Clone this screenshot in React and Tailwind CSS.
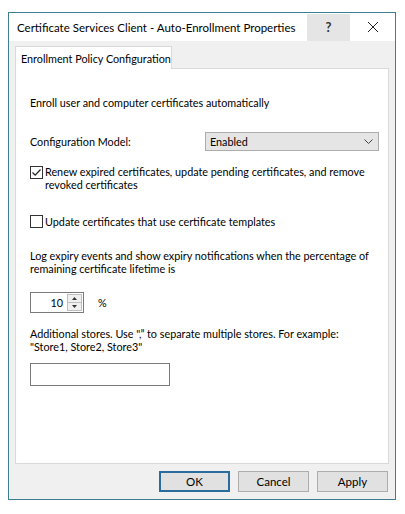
import React from "react";

const font = { fontFamily: 'Lato, "Liberation Sans", sans-serif' };

function CheckBox({ checked }) {
  return (
    <span className="flex h-[13px] w-[13px] shrink-0 items-center justify-center border border-[#333] bg-white">
      {checked && (
        <svg width="11" height="11" viewBox="0 0 11 11">
          <path d="M1.5 5.5 L4.2 8.2 L9.5 2.5" fill="none" stroke="#222" strokeWidth="1.2" />
        </svg>
      )}
    </span>
  );
}

function Button({ children, primary }) {
  return (
    <div
      className={
        "flex h-[21px] w-[71px] items-center justify-center bg-[#e1e1e1] text-[11.5px] text-black " +
        (primary ? "border-2 border-[#2a6c9c]" : "border border-[#adadad]")
      }
    >
      {children}
    </div>
  );
}

export default function App() {
  return (
    <div className="h-[514px] w-[405px] bg-white pl-[8px] pt-[12px]" style={font}>
      <div className="flex h-[488px] w-[388px] flex-col whitespace-nowrap border border-[#3f7f8f] bg-[#f0f0f0] text-[10.8px] leading-[13px] text-black">
        {/* title bar */}
        <div className="flex h-[28px] items-stretch bg-white">
          <div className="flex flex-1 items-center pl-[8px] text-[11.5px]">
            Certificate Services Client - Auto-Enrollment Properties
          </div>
          <div className="mt-[1px] flex w-[43px] items-center justify-center bg-[#e5e5e5] text-[13px] font-bold text-[#333]">
            ?
          </div>
          <div className="flex w-[45px] items-center justify-center">
            <svg width="12" height="12" viewBox="0 0 12 12">
              <path d="M1 1 L11 11 M11 1 L1 11" stroke="#222" strokeWidth="1" />
            </svg>
          </div>
        </div>

        {/* tab strip */}
        <div className="flex pl-[6px] pt-[5px]">
          <div className="relative z-10 -mb-px flex h-[23px] w-[157px] items-center border border-b-0 border-[#d9d9d9] bg-white pl-[5px]">
            Enrollment Policy Configuration
          </div>
        </div>

        {/* tab page */}
        <div className="mx-[6px] flex h-[396px] flex-col border border-[#d9d9d9] bg-white pl-[14px] pr-[8px]">
          <div className="mt-[27px]">Enroll user and computer certificates automatically</div>

          <div className="mt-[23px] flex items-center">
            <span className="w-[175px]">Configuration Model:</span>
            <div className="flex h-[19px] w-[174px] items-center justify-between border border-[#adadad] bg-[#e5e5e5] pl-[4px] pr-[5px]">
              <span>Enabled</span>
              <svg width="9" height="6" viewBox="0 0 9 6">
                <path d="M0.5 0.5 L4.5 4.5 L8.5 0.5" fill="none" stroke="#444" strokeWidth="1" />
              </svg>
            </div>
          </div>

          <div className="mt-[14px] flex items-start">
            <span className="mt-[1px]">
              <CheckBox checked />
            </span>
            <span className="ml-[2px]">
              Renew expired certificates, update pending certificates, and remove
              <br />
              revoked certificates
            </span>
          </div>

          <div className="mt-[24px] flex items-center">
            <CheckBox />
            <span className="ml-[2px]">Update certificates that use certificate templates</span>
          </div>

          <div className="mt-[21px]">
            Log expiry events and show expiry notifications when the percentage of
            <br />
            remaining certificate lifetime is
          </div>

          <div className="mt-[17px] flex items-center">
            <div className="flex h-[21px] w-[54px] items-center border border-[#7a7a7a] bg-white">
              <span className="w-[32px] text-right">10</span>
              <div className="ml-[4px] flex h-[17px] w-[15px] flex-col border border-[#bfbfbf]">
                <div className="flex flex-1 items-center justify-center border-b border-[#bfbfbf] bg-[#f0f0f0]">
                  <svg width="5" height="3" viewBox="0 0 5 3"><path d="M2.5 0 L5 3 L0 3 Z" fill="#333" /></svg>
                </div>
                <div className="flex flex-1 items-center justify-center bg-[#f0f0f0]">
                  <svg width="5" height="3" viewBox="0 0 5 3"><path d="M0 0 L5 0 L2.5 3 Z" fill="#333" /></svg>
                </div>
              </div>
            </div>
            <span className="ml-[14px]">%</span>
          </div>

          <div className="mt-[14px]">
            Additional stores. Use ",” to separate multiple stores. For example:
            <br />
            "Store1, Store2, Store3"
          </div>

          <div className="mt-[10px] h-[23px] w-[140px] border border-[#7a7a7a] bg-white" />
        </div>

        {/* buttons */}
        <div className="flex justify-end gap-[8px] pr-[7px] pt-[7px]">
          <Button primary>OK</Button>
          <Button>Cancel</Button>
          <Button>Apply</Button>
        </div>
      </div>
    </div>
  );
}
